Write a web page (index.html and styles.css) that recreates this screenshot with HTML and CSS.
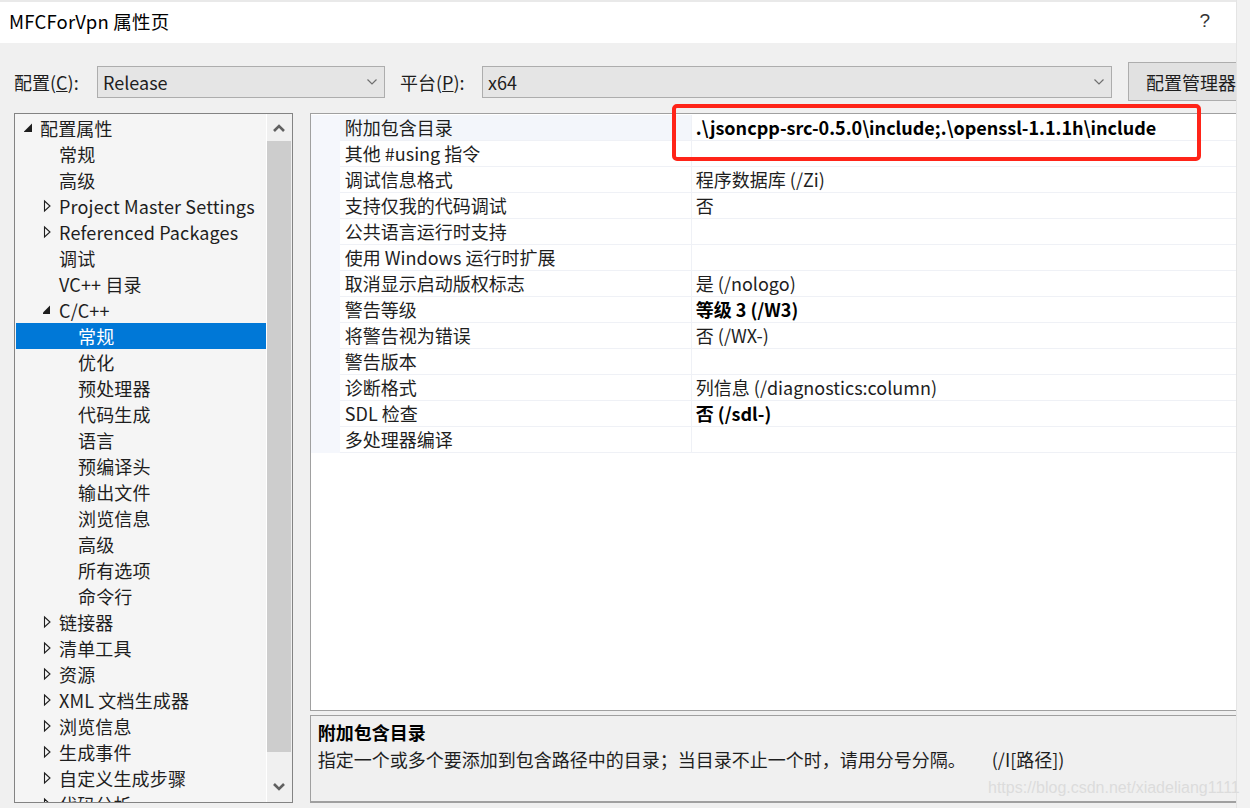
FILE: index.html
```html
<!DOCTYPE html>
<html lang="zh-CN">
<head>
    <meta charset="UTF-8">
    <title>MFCForVpn 属性页</title>
    <link rel="stylesheet" href="styles.css">
</head>
<body>

<div class="dialog">
    <!-- Заголовок окна -->
    <div class="titlebar">
        <span class="title">MFCForVpn 属性页</span>
        <span class="help">?</span>
    </div>

    <!-- Конфигурация и платформа -->
    <div class="toolbar">
        <label class="label label-config">配置(<u>C</u>):</label>
        <div class="combo combo-config">
            <span>Release</span>
            <svg class="chevron" width="12" height="8" viewBox="0 0 12 8"><polyline points="1.5,1.5 6,6 10.5,1.5" fill="none" stroke="#707070" stroke-width="1.2"/></svg>
        </div>
        <label class="label label-platform">平台(<u>P</u>):</label>
        <div class="combo combo-platform">
            <span>x64</span>
            <svg class="chevron" width="12" height="8" viewBox="0 0 12 8"><polyline points="1.5,1.5 6,6 10.5,1.5" fill="none" stroke="#707070" stroke-width="1.2"/></svg>
        </div>
        <button class="btn">配置管理器</button>
    </div>

    <div class="main">
        <!-- Дерево свойств -->
        <div class="tree">
            <div class="tree-list">
                <div class="node lvl0"><span class="exp"><svg width="16" height="16" viewBox="0 0 16 16"><polygon points="8,3.5 8,12 -0.5,12" fill="#1e1e1e"/></svg></span>配置属性</div>
                <div class="node lvl1"><span class="exp"></span>常规</div>
                <div class="node lvl1"><span class="exp"></span>高级</div>
                <div class="node lvl1"><span class="exp"><svg width="16" height="16" viewBox="0 0 16 16"><polygon points="1.5,3 7,8 1.5,13" fill="none" stroke="#1e1e1e" stroke-width="1.1"/></svg></span>Project Master Settings</div>
                <div class="node lvl1"><span class="exp"><svg width="16" height="16" viewBox="0 0 16 16"><polygon points="1.5,3 7,8 1.5,13" fill="none" stroke="#1e1e1e" stroke-width="1.1"/></svg></span>Referenced Packages</div>
                <div class="node lvl1"><span class="exp"></span>调试</div>
                <div class="node lvl1"><span class="exp"></span>VC++ 目录</div>
                <div class="node lvl1"><span class="exp"><svg width="16" height="16" viewBox="0 0 16 16"><polygon points="7,3.5 7,12 -1.5,12" fill="#1e1e1e"/></svg></span>C/C++</div>
                <div class="node lvl2 selected"><span class="exp"></span>常规</div>
                <div class="node lvl2"><span class="exp"></span>优化</div>
                <div class="node lvl2"><span class="exp"></span>预处理器</div>
                <div class="node lvl2"><span class="exp"></span>代码生成</div>
                <div class="node lvl2"><span class="exp"></span>语言</div>
                <div class="node lvl2"><span class="exp"></span>预编译头</div>
                <div class="node lvl2"><span class="exp"></span>输出文件</div>
                <div class="node lvl2"><span class="exp"></span>浏览信息</div>
                <div class="node lvl2"><span class="exp"></span>高级</div>
                <div class="node lvl2"><span class="exp"></span>所有选项</div>
                <div class="node lvl2"><span class="exp"></span>命令行</div>
                <div class="node lvl1"><span class="exp"><svg width="16" height="16" viewBox="0 0 16 16"><polygon points="1.5,3 7,8 1.5,13" fill="none" stroke="#1e1e1e" stroke-width="1.1"/></svg></span>链接器</div>
                <div class="node lvl1"><span class="exp"><svg width="16" height="16" viewBox="0 0 16 16"><polygon points="1.5,3 7,8 1.5,13" fill="none" stroke="#1e1e1e" stroke-width="1.1"/></svg></span>清单工具</div>
                <div class="node lvl1"><span class="exp"><svg width="16" height="16" viewBox="0 0 16 16"><polygon points="1.5,3 7,8 1.5,13" fill="none" stroke="#1e1e1e" stroke-width="1.1"/></svg></span>资源</div>
                <div class="node lvl1"><span class="exp"><svg width="16" height="16" viewBox="0 0 16 16"><polygon points="1.5,3 7,8 1.5,13" fill="none" stroke="#1e1e1e" stroke-width="1.1"/></svg></span>XML 文档生成器</div>
                <div class="node lvl1"><span class="exp"><svg width="16" height="16" viewBox="0 0 16 16"><polygon points="1.5,3 7,8 1.5,13" fill="none" stroke="#1e1e1e" stroke-width="1.1"/></svg></span>浏览信息</div>
                <div class="node lvl1"><span class="exp"><svg width="16" height="16" viewBox="0 0 16 16"><polygon points="1.5,3 7,8 1.5,13" fill="none" stroke="#1e1e1e" stroke-width="1.1"/></svg></span>生成事件</div>
                <div class="node lvl1"><span class="exp"><svg width="16" height="16" viewBox="0 0 16 16"><polygon points="1.5,3 7,8 1.5,13" fill="none" stroke="#1e1e1e" stroke-width="1.1"/></svg></span>自定义生成步骤</div>
                <div class="node lvl1"><span class="exp"><svg width="16" height="16" viewBox="0 0 16 16"><polygon points="1.5,3 7,8 1.5,13" fill="none" stroke="#1e1e1e" stroke-width="1.1"/></svg></span>代码分析</div>
            </div>
            <!-- Полоса прокрутки -->
            <div class="scrollbar">
                <div class="sb-btn"><svg width="14" height="10" viewBox="0 0 14 10"><polyline points="2,8 7,3 12,8" fill="none" stroke="#606060" stroke-width="2.6"/></svg></div>
                <div class="sb-thumb"></div>
                <div class="sb-track"></div>
                <div class="sb-btn"><svg width="14" height="10" viewBox="0 0 14 10"><polyline points="2,2 7,7 12,2" fill="none" stroke="#606060" stroke-width="2.6"/></svg></div>
            </div>
        </div>

        <!-- Правая часть: сетка свойств и описание -->
        <div class="right">
            <div class="grid">
                <div class="row current"><div class="gutter"></div><div class="name">附加包含目录</div><div class="value bold">.\jsoncpp-src-0.5.0\include;.\openssl-1.1.1h\include</div></div>
                <div class="row"><div class="gutter"></div><div class="name">其他 #using 指令</div><div class="value"></div></div>
                <div class="row"><div class="gutter"></div><div class="name">调试信息格式</div><div class="value">程序数据库 (/Zi)</div></div>
                <div class="row"><div class="gutter"></div><div class="name">支持仅我的代码调试</div><div class="value">否</div></div>
                <div class="row"><div class="gutter"></div><div class="name">公共语言运行时支持</div><div class="value"></div></div>
                <div class="row"><div class="gutter"></div><div class="name">使用 Windows 运行时扩展</div><div class="value"></div></div>
                <div class="row"><div class="gutter"></div><div class="name">取消显示启动版权标志</div><div class="value">是 (/nologo)</div></div>
                <div class="row"><div class="gutter"></div><div class="name">警告等级</div><div class="value bold">等级 3 (/W3)</div></div>
                <div class="row"><div class="gutter"></div><div class="name">将警告视为错误</div><div class="value">否 (/WX-)</div></div>
                <div class="row"><div class="gutter"></div><div class="name">警告版本</div><div class="value"></div></div>
                <div class="row"><div class="gutter"></div><div class="name">诊断格式</div><div class="value">列信息 (/diagnostics:column)</div></div>
                <div class="row"><div class="gutter"></div><div class="name">SDL 检查</div><div class="value bold">否 (/sdl-)</div></div>
                <div class="row"><div class="gutter"></div><div class="name">多处理器编译</div><div class="value"></div></div>
            </div>
            <div class="desc">
                <div class="desc-title">附加包含目录</div>
                <div class="desc-text">指定一个或多个要添加到包含路径中的目录；当目录不止一个时，请用分号分隔。<span class="switch">(/I[路径])</span></div>
            </div>
        </div>
    </div>
</div>

<!-- Поверх: красная рамка и водяной знак -->
<div class="highlight"></div>
<div class="watermark">https://blog.csdn.net/xiadeliang1111</div>

</body>
</html>
```

FILE: styles.css
```css
body {
    margin: 0;
    background-color: #f2f2f2;
    font-family: "Noto Sans CJK SC", "Noto Sans", sans-serif;
    font-size: 18px;
    color: #1e1e1e;
    overflow: hidden;
    position: relative;
    height: 808px;
}

.dialog {
    width: 1236px;
    height: 808px;
    background-color: #f0f0f0;
    overflow: hidden;
    border-right: 1px solid #e4e4e4;
}

/* Заголовок */
.titlebar {
    height: 41px;
    background-color: #fff;
    border-top: 2px solid #e9e9e9;
    display: flex;
    align-items: center;
    justify-content: space-between;
    padding: 0 0 0 9px;
    color: #000;
}
.titlebar .title { line-height: 26px; margin-top: -3px; font-size: 18.5px; letter-spacing: 0.2px; }
.titlebar .help { margin-right: 26px; margin-top: -3px; font-family: "Liberation Sans", sans-serif; font-size: 19px; color: #333; }

/* Строка конфигурации */
.toolbar {
    display: flex;
    align-items: center;
    height: 39px;
    padding: 19px 0 0 14px;
    margin-bottom: 12px;
}
.toolbar > * { flex-shrink: 0; }
.label { line-height: 26px; }
.label-config { width: 83px; }
.label-platform { width: 82px; margin-left: 15px; }
.combo {
    box-sizing: border-box;
    height: 32px;
    background-color: #e5e5e5;
    border: 1px solid #adadad;
    display: flex;
    align-items: center;
    justify-content: space-between;
    padding: 0 6px 0 5px;
}
.combo-config { width: 288px; }
.combo-platform { width: 630px; }
.btn {
    box-sizing: border-box;
    height: 39px;
    width: 130px;
    margin-left: 16px;
    text-align: left;
    padding: 0 0 0 17px;
    background-color: #e1e1e1;
    border: 1px solid #adadad;
    font-family: inherit;
    font-size: 18px;
    color: #1e1e1e;
    white-space: nowrap;
}

.main {
    display: flex;
    padding-left: 14px;
}

/* Дерево */
.tree {
    box-sizing: border-box;
    width: 279px;
    height: 690px;
    border: 1px solid #838383;
    background-color: #f5f5f5;
    display: flex;
    overflow: hidden;
}
.tree-list { width: 250px; padding: 1px 0 0 1px; }
.node {
    height: 26px;
    line-height: 26px;
    display: flex;
    align-items: center;
    white-space: nowrap;
    letter-spacing: 0.15px;
}
.node .exp { width: 16px; height: 16px; flex-shrink: 0; display: flex; }
.node.lvl0 { padding-left: 8px; }
.node.lvl1 { padding-left: 27px; }
.node.lvl2 { padding-left: 46px; }
.node.selected { background-color: #0078d7; color: #fff; }

.scrollbar {
    width: 25px;
    border-left: 1px solid #fff;
    background-color: #f0f0f0;
    display: flex;
    flex-direction: column;
}
.sb-btn { height: 27px; display: flex; align-items: center; justify-content: center; }
.sb-btn:last-child { height: 30px; }
.sb-thumb { height: 611px; margin: 0 1px 0 0; background-color: #cdcdcd; }
.sb-track { flex: 1; }

/* Сетка свойств */
.right {
    margin-left: 17px;
    width: 927px;
    display: flex;
    flex-direction: column;
    gap: 4px;
}
.grid {
    box-sizing: border-box;
    height: 598px;
    border: 1px solid #a0a0a0;
    border-right: none;
    background-color: #fff;
    padding-top: 1px;
}
.row {
    display: grid;
    grid-template-columns: 29px 352px 1fr;
    height: 26px;
    line-height: 25px;
}
.gutter { background-color: #f5f7fc; }
.row .name, .row .value {
    border-bottom: 1px solid #eff1f6;
    white-space: nowrap;
    overflow: hidden;
}
.row .name { padding-left: 5px; border-right: 1px solid #eff1f6; }
.row .value { padding-left: 4px; }
.row.current .name { background-color: #f3f6fb; }
.bold { font-weight: bold; color: #000; }

/* Описание */
.desc {
    box-sizing: border-box;
    height: 88px;
    border: 1px solid #a0a0a0;
    border-bottom-width: 2px;
    border-right: none;
    padding: 3px 0 0 7px;
    line-height: 27px;
}
.desc-title { font-weight: bold; color: #000; }
.switch { margin-left: 26px; }

/* Красная рамка выделения */
.highlight {
    position: absolute;
    left: 672px;
    top: 104px;
    width: 521px;
    height: 49px;
    border: 4px solid #ff2418;
    border-radius: 5px;
}

.watermark {
    position: absolute;
    left: 988px;
    top: 779px;
    font-family: "Liberation Sans", sans-serif;
    font-size: 16px;
    color: #dcdcdc;
    white-space: nowrap;
}
```
